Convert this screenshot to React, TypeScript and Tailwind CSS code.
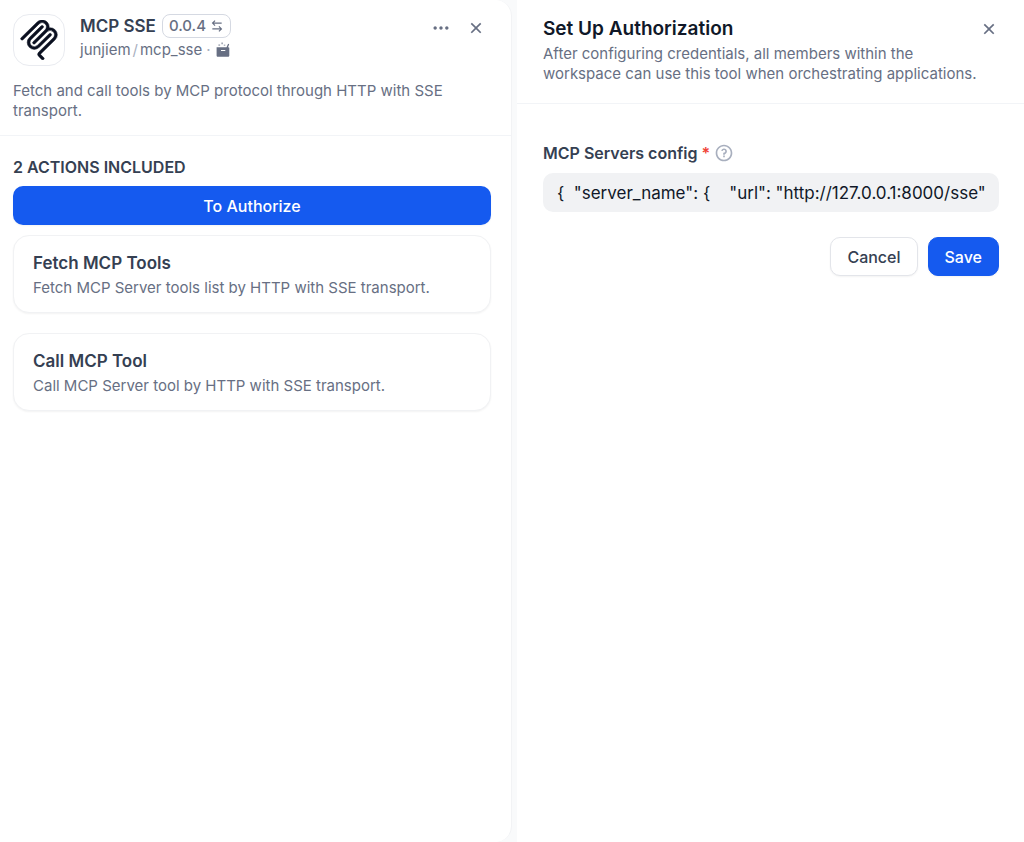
import { useState } from "react";
import type { ReactNode } from "react";
import {
  RiArrowLeftRightLine,
  RiCloseLine,
  RiMoreFill,
  RiQuestionLine,
} from "react-icons/ri";

type Action = {
  name: string;
  description: string;
};

const actions: Action[] = [
  {
    name: "Fetch MCP Tools",
    description: "Fetch MCP Server tools list by HTTP with SSE transport.",
  },
  {
    name: "Call MCP Tool",
    description: "Call MCP Server tool by HTTP with SSE transport.",
  },
];

function McpLogo() {
  return (
    <svg
      className="w-10 h-10"
      viewBox="0 0 24 24"
      fill="currentColor"
      stroke="currentColor"
      strokeWidth="0.3"
      aria-hidden="true">
      <path d="M15.688 2.343a2.588 2.588 0 00-3.61 0l-9.626 9.44a.863.863 0 01-1.203 0 .823.823 0 010-1.18l9.626-9.44a4.313 4.313 0 016.016 0 4.116 4.116 0 011.204 3.54 4.3 4.3 0 013.609 1.18l.05.05a4.115 4.115 0 010 5.9l-8.706 8.537a.274.274 0 000 .393l1.788 1.754a.823.823 0 010 1.18.863.863 0 01-1.203 0l-1.788-1.753a1.92 1.92 0 010-2.754l8.706-8.538a2.47 2.47 0 000-3.54l-.05-.049a2.588 2.588 0 00-3.607-.003l-7.172 7.034-.002.002-.098.097a.863.863 0 01-1.204 0 .823.823 0 010-1.18l7.273-7.133a2.47 2.47 0 00-.003-3.537z" />
      <path d="M14.485 4.703a.823.823 0 000-1.18.863.863 0 00-1.204 0l-7.119 6.982a4.115 4.115 0 000 5.9 4.314 4.314 0 006.016 0l7.12-6.982a.823.823 0 000-1.18.863.863 0 00-1.204 0l-7.119 6.982a2.588 2.588 0 01-3.61 0 2.47 2.47 0 010-3.54l7.12-6.982z" />
    </svg>
  );
}

function PackageIcon() {
  return (
    <svg
      className="w-4 h-4"
      viewBox="0 0 16 16"
      fill="currentColor"
      aria-hidden="true">
      <path
        fillRule="evenodd"
        d="M1.6 5.2h9.9l1.6-3.4 1.1.5-1.2 2.9h.4c.6 0 .9.3.9.9v7.3c0 .8-.5 1.3-1.3 1.3H2.9c-.8 0-1.3-.5-1.3-1.3zM6 7.9v1.2h4.3V7.9z"
      />
      <path opacity="0.5" d="M3.4 2.2h1.7v1.7H3.4zM8.8 2.6h1.5v1.5H8.8z" />
      <path opacity="0.6" d="M6.3.6H8v1.7H6.3z" />
    </svg>
  );
}

function IconButton({
  label,
  onClick,
  children,
}: {
  label: string;
  onClick?: () => void;
  children: ReactNode;
}) {
  return (
    <button
      type="button"
      aria-label={label}
      onClick={onClick}
      className="flex w-5 h-5 items-center justify-center rounded-md text-[#676f83] hover:bg-gray-100">
      {children}
    </button>
  );
}

function ActionCard({ action }: { action: Action }) {
  return (
    <li className="rounded-2xl border border-[#f1f2f4] bg-white px-[19px] pt-[15px] pb-3 shadow-xs">
      <h3 className="text-[17px] leading-6 font-semibold text-[#354052]">
        {action.name}
      </h3>
      <p className="mt-px text-[15px] leading-6 text-[#676f83]">
        {action.description}
      </p>
    </li>
  );
}

function PluginPanel() {
  return (
    <section className="w-1/2 min-w-0 rounded-r-2xl border-r border-[#f2f3f5] bg-white">
      <header className="border-b border-[#f2f4f7] px-[13px] py-3.5">
        <div className="flex">
          <div className="flex w-13 h-13 shrink-0 items-center justify-center rounded-2xl border border-[#e9ebf0] text-[#0b1020]">
            <McpLogo />
          </div>
          <div className="ml-[15px] min-w-0">
            <div className="flex items-center gap-1.5">
              <h1 className="text-[17px] leading-6 font-semibold text-[#354052]">
                MCP SSE
              </h1>
              <button
                type="button"
                className="flex h-6 items-center gap-1 rounded-lg border border-[#d5d9e2] px-1.5 text-[15px] font-medium text-[#676f83]">
                0.0.4
                <RiArrowLeftRightLine className="w-3.5 h-3.5" />
              </button>
            </div>
            <div className="flex items-center text-[15px] leading-6 text-[#676f83]">
              <span>junjiem</span>
              <span className="mx-0.5 text-[#a8b0bf]">/</span>
              <span>mcp_sse</span>
              <span className="mx-1 text-[#a8b0bf]">·</span>
              <PackageIcon />
            </div>
          </div>
          <div className="ml-auto mt-1 mr-3 flex gap-[15px]">
            <IconButton label="More">
              <RiMoreFill className="w-5 h-5" />
            </IconButton>
            <IconButton label="Close plugin details">
              <RiCloseLine className="w-5 h-5" />
            </IconButton>
          </div>
        </div>
        <p className="mt-[15px] mr-12 text-[15px] leading-5 text-[#676f83]">
          Fetch and call tools by MCP protocol through HTTP with SSE transport.
        </p>
      </header>

      <div className="pl-[13px] pr-5 pt-[19px]">
        <h2 className="text-base leading-6 font-semibold text-[#354052] uppercase">
          2 actions included
        </h2>
        <button
          type="button"
          className="mt-[7px] w-full h-[39px] rounded-[10px] bg-[#155aef] text-base font-medium text-white shadow-xs hover:bg-[#004aeb]">
          To Authorize
        </button>
        <ul className="mt-2.5 flex flex-col gap-5">
          {actions.map((action) => (
            <ActionCard key={action.name} action={action} />
          ))}
        </ul>
      </div>
    </section>
  );
}

function AuthorizationPanel() {
  const [config, setConfig] = useState(
    '{  "server_name": {    "url": "http://127.0.0.1:8000/sse"'
  );

  return (
    <section className="flex-1 min-w-0 bg-white">
      <header className="flex items-start justify-between border-b border-[#f2f4f7] pl-[26px] pr-[25px] pt-[15px] pb-[19px]">
        <div>
          <h2 className="text-[19px] leading-7 font-semibold text-[#101828]">
            Set Up Authorization
          </h2>
          <p className="mt-px max-w-[436px] text-[15px] leading-5 text-[#676f83]">
            After configuring credentials, all members within the workspace can
            use this tool when orchestrating applications.
          </p>
        </div>
        <div className="flex h-7 items-center">
          <IconButton label="Close authorization">
            <RiCloseLine className="w-5 h-5" />
          </IconButton>
        </div>
      </header>

      <form
        className="pl-[26px] pr-[25px] pt-[35px]"
        onSubmit={(event) => event.preventDefault()}>
        <div className="flex items-center">
          <label
            htmlFor="servers-config"
            className="text-base leading-7 font-semibold text-[#354052]">
            MCP Servers config <span className="text-[#f04438]">*</span>
          </label>
          <RiQuestionLine className="ml-1 w-5 h-5 text-[#a8afbe]" />
        </div>
        <input
          id="servers-config"
          type="text"
          value={config}
          onChange={(event) => setConfig(event.target.value)}
          className="mt-1.5 block w-full h-[39px] rounded-[10px] bg-[#f1f2f4] px-3.5 text-[17px] text-[#101828] outline-none"
        />
        <div className="mt-[25px] flex justify-end gap-2.5">
          <button
            type="button"
            className="h-[39px] rounded-[10px] border border-[#e3e5ea] bg-white px-4 text-base font-medium text-[#354052] shadow-xs">
            Cancel
          </button>
          <button
            type="submit"
            className="h-[39px] rounded-[10px] border border-[#155aef] bg-[#155aef] px-4 text-base font-medium text-white shadow-xs">
            Save
          </button>
        </div>
      </form>
    </section>
  );
}

export default function App() {
  return (
    <main className="flex min-h-screen gap-[5px] bg-[#f9fafb] font-[Inter,sans-serif]">
      <PluginPanel />
      <AuthorizationPanel />
    </main>
  );
}
